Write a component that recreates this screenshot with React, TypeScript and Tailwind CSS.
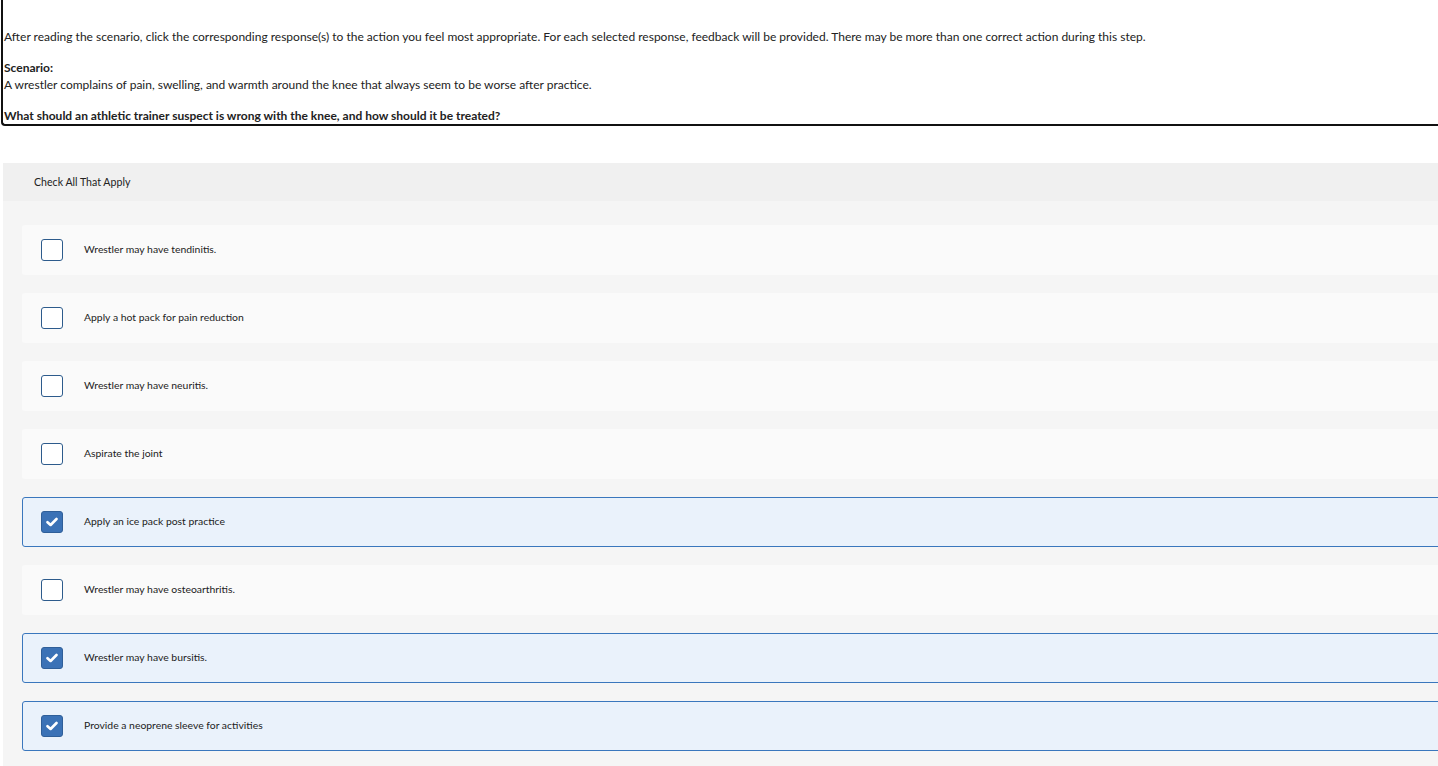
import React from "react";

const items = [
  { text: "Wrestler may have tendinitis.", checked: false },
  { text: "Apply a hot pack for pain reduction", checked: false },
  { text: "Wrestler may have neuritis.", checked: false },
  { text: "Aspirate the joint", checked: false },
  { text: "Apply an ice pack post practice", checked: true },
  { text: "Wrestler may have osteoarthritis.", checked: false },
  { text: "Wrestler may have bursitis.", checked: true },
  { text: "Provide a neoprene sleeve for activities", checked: true },
];

function Check() {
  return (
    <svg width="12" height="10" viewBox="0 0 12 10">
      <path d="M1.5 5.2 L4.6 8 L10.5 2" fill="none" stroke="white" strokeWidth="2.6" strokeLinecap="round" strokeLinejoin="round" />
    </svg>
  );
}

export default function App() {
  return (
    <div className="w-[1438px] h-[766px] overflow-hidden bg-white text-[#333]" style={{ fontFamily: "Lato, 'Open Sans', sans-serif" }}>
      <div className="w-[1460px]">
        <div className="ml-[1px] border-l-2 border-b-2 border-[#111] rounded-bl-[4px] h-[126px] pl-[1px] pt-[29px] text-[12px] leading-[16px] text-[#222]">
          <p>After reading the scenario, click the corresponding response(s) to the action you feel most appropriate. For each selected response, feedback will be provided. There may be more than one correct action during this step.</p>
          <p className="mt-[15px] font-bold">Scenario:</p>
          <p className="mt-[1px]">A wrestler complains of pain, swelling, and warmth around the knee that always seem to be worse after practice.</p>
          <p className="mt-[15px] font-bold">What should an athletic trainer suspect is wrong with the knee, and how should it be treated?</p>
        </div>
        <div className="mt-[37px] ml-[3px] bg-[#f5f5f5]">
          <div className="h-[38px] bg-[#f0f0f0] flex items-center pl-[31px] pt-[1px] text-[10.6px] text-[#222]">Check All That Apply</div>
          <div className="pt-[24px] pl-[19px] flex flex-col gap-[18px] pb-[20px]">
            {items.map((it) => (
              <div
                key={it.text}
                className={
                  it.checked
                    ? "h-[50px] flex items-center bg-[#eaf2fb] border border-[#3a77bd] rounded-[3px] pl-[18px]"
                    : "h-[50px] flex items-center bg-[#fafafa] rounded-[3px] pl-[19px]"
                }
              >
                {it.checked ? (
                  <div className="w-[22px] h-[22px] rounded-[3px] bg-[#3b72b6] border border-[#2f5f99] flex items-center justify-center">
                    <Check />
                  </div>
                ) : (
                  <div className="w-[22px] h-[22px] rounded-[3px] bg-white border-[1.5px] border-[#2d5b8c]" />
                )}
                <span className="ml-[21px] text-[10.4px] text-[#222]">{it.text}</span>
              </div>
            ))}
          </div>
        </div>
      </div>
    </div>
  );
}
